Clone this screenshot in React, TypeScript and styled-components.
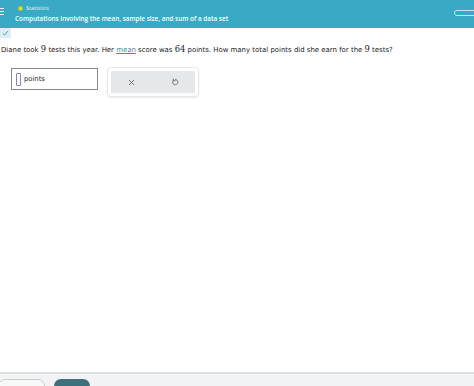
import React from "react";
import styled, { createGlobalStyle } from "styled-components";

const Global = createGlobalStyle`
  html, body { margin: 0; padding: 0; background: #fff; }
  body { font-family: "DejaVu Sans", Verdana, sans-serif; width: 474px; height: 386px; overflow: hidden; }
  #root { height: 386px; display: flex; flex-direction: column; }
`;

const Header = styled.header`
  height: 28px;
  background: #3aa9c5;
  display: flex;
  align-items: stretch;
  position: relative;
  flex-shrink: 0;
`;

const Burger = styled.div`
  width: 15px;
  display: flex;
  flex-direction: column;
  justify-content: center;
  gap: 2px;
  padding-bottom: 6px;
  span { display: block; width: 4px; height: 1px; background: #e6f5f9; }
`;

const Titles = styled.div`
  display: flex;
  flex-direction: column;
  padding-top: 4px;
  color: #fff;
`;

const Topic = styled.div`
  display: flex;
  align-items: center;
  gap: 3px;
  font-family: "Open Sans", sans-serif;
  font-size: 5.6px;
  color: #e8f6fa;
  padding-left: 3px;
  height: 8px;
`;

const Dot = styled.span`
  width: 5px;
  height: 5px;
  border-radius: 50%;
  background: #e3e21c;
  border: 0.5px solid #c9c71a;
  box-sizing: border-box;
`;

const Title = styled.div`
  font-family: "Open Sans", sans-serif;
  font-size: 6.4px;
  font-weight: 600;
  margin-top: 2px;
`;

const Pill = styled.div`
  position: absolute;
  right: -8px;
  top: 10px;
  width: 26px;
  height: 4px;
  border: 1px solid #bfe7f1;
  border-radius: 3px;
`;

const CheckTab = styled.div`
  width: 11px;
  height: 10px;
  background: #d9eef5;
  display: flex;
  align-items: center;
  justify-content: center;
  flex-shrink: 0;
`;

const Main = styled.main`
  flex: 1;
  display: flex;
  flex-direction: column;
  padding: 6px 0 0 1px;
`;

const Question = styled.p`
  margin: 0;
  font-family: "DejaVu Sans", Verdana, sans-serif;
  font-size: 6.95px;
  color: #222;
  line-height: 11px;
  white-space: nowrap;
`;

const Num = styled.span`
  font-family: "DejaVu Serif", serif;
  font-size: 8.4px;
`;

const Link = styled.span`
  color: #3a8fb0;
  text-decoration: underline;
`;

const AnswerRow = styled.div`
  display: flex;
  align-items: flex-start;
  gap: 10px;
  margin-top: 12px;
  margin-left: 10px;
`;

const InputBox = styled.div`
  width: 81px;
  height: 20px;
  border: 1px solid #8a8a8a;
  display: flex;
  align-items: center;
  gap: 3px;
  padding-left: 4px;
  box-sizing: content-box;
  font-size: 6.8px;
  color: #222;
`;

const Cursor = styled.span`
  height: 13px;
  width: 5px;
  border: 1px solid #8c79d6;
  border-radius: 1px;
  box-sizing: border-box;
`;

const ToolPanel = styled.div`
  width: 90px;
  height: 28px;
  border-radius: 3px;
  background: #fff;
  box-shadow: 0 0 0 1px #e6e9ec, 0 1px 3px rgba(0,0,0,0.18);
  padding: 3px;
  box-sizing: border-box;
`;

const ToolInner = styled.div`
  height: 100%;
  background: #e5e8ea;
  border-radius: 2px;
  display: flex;
  align-items: center;
  justify-content: space-between;
  padding: 0 16px 0 17px;
`;

const Footer = styled.footer`
  height: 14px;
  box-sizing: border-box;
  border-top: 2px solid #dcdfe1;
  background: #f2f3f4;
  display: flex;
  align-items: flex-start;
  gap: 9px;
  padding-top: 5px;
  flex-shrink: 0;
  overflow: hidden;
`;

const FootBtn = styled.div<{ $primary?: boolean }>`
  height: 14px;
  width: ${(p) => (p.$primary ? "36px" : "47px")};
  border-radius: 7px 7px 0 0;
  background: ${(p) => (p.$primary ? "#3d6f7d" : "#f7f8f8")};
  border: ${(p) => (p.$primary ? "none" : "1px solid #c9cdcf")};
  margin-left: ${(p) => (p.$primary ? "0" : "-2px")};
  box-sizing: border-box;
  flex-shrink: 0;
`;

export default function App() {
  return (
    <>
      <Global />
      <Header>
        <Burger>
          <span />
          <span />
          <span />
        </Burger>
        <Titles>
          <Topic>
            <Dot />
            Statistics
          </Topic>
          <Title>Computations involving the mean, sample size, and sum of a data set</Title>
        </Titles>
        <Pill />
      </Header>
      <CheckTab>
        <svg width="7" height="6" viewBox="0 0 7 6">
          <path d="M1 3.5 L2.6 5 L6 1" stroke="#5b8fa3" strokeWidth="0.9" fill="none" />
        </svg>
      </CheckTab>
      <Main>
        <Question>
          Diane took <Num>9</Num> tests this year. Her <Link>mean</Link> score was <Num>64</Num> points. How many total points did she earn for the <Num>9</Num> tests?
        </Question>
        <AnswerRow>
          <InputBox>
            <Cursor />
            points
          </InputBox>
          <ToolPanel>
            <ToolInner>
              <svg width="7" height="7" viewBox="0 0 7 7">
                <path d="M1 1 L6 6 M6 1 L1 6" stroke="#555" strokeWidth="0.8" />
              </svg>
              <svg width="8" height="8" viewBox="0 0 8 8">
                <path d="M2.2 2.6 A2.6 2.6 0 1 0 4 1.6" stroke="#555" strokeWidth="0.8" fill="none" />
                <path d="M2.4 0.6 L2.2 2.8 L4.3 2.6" stroke="#555" strokeWidth="0.8" fill="none" />
              </svg>
            </ToolInner>
          </ToolPanel>
        </AnswerRow>
      </Main>
      <Footer>
        <FootBtn />
        <FootBtn $primary />
      </Footer>
    </>
  );
}
